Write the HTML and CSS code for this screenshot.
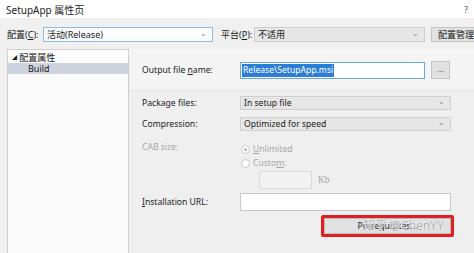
FILE: index.html
```html
<!DOCTYPE html>
<html>
<head>
<meta charset="utf-8">
<link rel="stylesheet" href="styles.css">
</head>
<body>
<div class="win">
  <div class="titlebar">
    <span class="title">SetupApp 属性页</span>
    <span class="help">?</span>
  </div>
  <div class="main">
    <div class="toprow">
      <span class="lbl1">配置(<u>C</u>):</span>
      <div class="combo active c1"><span>活动(Release)</span><span class="chev">&#8964;</span></div>
      <span class="lbl2">平台(<u>P</u>):</span>
      <div class="combo c2"><span>不适用</span><span class="chev">&#8964;</span></div>
      <div class="btn cfgmgr">配置管理器</div>
    </div>
    <div class="content">
      <div class="tree">
        <div class="node"><span class="tri">&#9698;</span> 配置属性</div>
        <div class="node sel">Build</div>
      </div>
      <div class="panel">
        <div class="top">
          <div class="row r-out">
            <span class="label">Output file <u>n</u>ame:</span>
            <div class="input focus"><span class="seltext">Release\SetupApp.msi</span></div>
            <div class="btn dots">...</div>
          </div>
        </div>
        <div class="bottom">
          <div class="row r-pkg">
            <span class="label">Package files:</span>
            <div class="combo wide"><span>In setup file</span><span class="chev">&#8964;</span></div>
          </div>
          <div class="row r-cmp">
            <span class="label">Compression:</span>
            <div class="combo wide"><span>Optimized for speed</span><span class="chev">&#8964;</span></div>
          </div>
          <div class="row r-cab">
            <span class="label dis">CAB size:</span>
            <div class="radios">
              <div class="radio"><span class="dot on"></span><span class="dis"><u>U</u>nlimited</span></div>
              <div class="radio"><span class="dot"></span><span class="dis">Custo<u>m</u>:</span></div>
              <div class="kbrow"><div class="kbinput"></div><span class="dis kb">Kb</span></div>
            </div>
          </div>
          <div class="row r-url">
            <span class="label"><u>I</u>nstallation URL:</span>
            <div class="input wide"></div>
          </div>
          <div class="row r-pre">
            <div class="redbox"><div class="btn prereq">Prerequisites...</div></div>
            <span class="wm">知乎 @ChenYY</span>
          </div>
        </div>
      </div>
    </div>
  </div>
</div>
</body>
</html>
```
FILE: styles.css
```css
* { box-sizing: border-box; }
html, body { margin: 0; padding: 0; }
body {
  width: 474px; height: 253px; overflow: hidden;
  font-family: "Noto Sans", "Noto Sans CJK SC", sans-serif;
  font-size: 9px; color: #1a1a1a;
  background: #f0f0f0;
}
u { text-decoration: underline; }
.win { width: 474px; height: 253px; display: flex; flex-direction: column; overflow: hidden; }
.titlebar {
  height: 18px; background: #fff; display: flex; align-items: center;
  justify-content: space-between; padding: 0 6px 0 6px;
}
.title { font-size: 10px; color: #222; }
.help { font-size: 9px; color: #555; }
.main { flex: 1; padding: 9px 0 0 7px; display: flex; flex-direction: column; }
.toprow { display: flex; align-items: center; height: 15px; }
.toprow > * { flex-shrink: 0; }
.lbl1 { width: 36px; }
.lbl2 { width: 33px; margin-left: 8px; }
.combo {
  height: 15px; display: flex; align-items: center; justify-content: space-between;
  padding: 0 5px 0 3px; background: #e6e6e6; border: 1px solid #cfcfcf;
}
.combo .chev { font-size: 8px; color: #888; line-height: 1; margin-top: -4px; }
.combo.active { background: #fafcfe; border-color: #8cbbe6; }
.c1 { width: 170px; }
.c2 { width: 171px; }
.btn {
  background: #e1e1e1; border: 1px solid #c4c4c4; display: flex;
  align-items: center; justify-content: center;
}
.cfgmgr { width: 56px; height: 15px; margin-left: 6px; justify-content: flex-start; padding-left: 6px; white-space: nowrap; }
.content { flex: 1; display: flex; margin-top: 7px; }
.tree {
  width: 122px; background: #fbfbfb; border: 1px solid #cfcfcf; border-bottom: none;
  padding-top: 2px;
}
.node { height: 11px; line-height: 11px; padding-left: 4px; overflow: hidden; }
.node .tri { font-size: 5px; vertical-align: 2px; }
.node.sel { background: #cfd3de; padding-left: 20px; }
.panel { flex: 1; display: flex; flex-direction: column; font-size: 8.6px; }
.top { height: 42px; background: #f4f4f4; padding-top: 12px; border-bottom: 1px solid #e8e8e8; }
.bottom { flex: 1; background: #efefef; padding-top: 5px; }
.row { display: flex; align-items: center; padding-left: 13px; }
.label { width: 98px; flex-shrink: 0; }
.dis { color: #a6a6a6; }
.input { height: 17px; background: #fff; border: 1px solid #c8c8c8; }
.input.focus { width: 185px; border-color: #6aa6d9; padding: 1px 0 0 1px; }
.seltext { background: #2a7fd4; color: #fff; padding: 0 1px; line-height: 13px; display: inline-block; }
.dots { width: 19px; height: 18px; margin-left: 6px; font-size: 8px; color: #555; align-items: flex-end; padding-bottom: 4px; }
.combo.wide { width: 211px; height: 14px; }
.r-cmp { margin-top: 7px; }
.r-cab { margin-top: 8px; align-items: flex-start; }
.r-cab .label { margin-top: 2px; }
.radios { display: flex; flex-direction: column; margin-left: 1px; padding-top: 3px; }
.radio { display: flex; align-items: center; height: 14px; }
.dot {
  width: 9px; height: 9px; border-radius: 50%; border: 1px solid #c8c8c8; background: #fff;
  margin-right: 3px; position: relative;
}
.dot.on::after {
  content: ""; position: absolute; left: 2px; top: 2px; width: 3px; height: 3px;
  border-radius: 50%; background: #b5b5b5;
}
.kbrow { display: flex; align-items: center; margin: 1px 0 0 18px; }
.kbinput { width: 53px; height: 18px; border: 1px solid #dadada; background: #f2f2f2; }
.kb { margin-left: 6px; font-family: "Liberation Serif", serif; font-size: 9.5px; }
.r-url { margin-top: 4px; }
.input.wide { width: 211px; height: 18px; }
.r-pre { margin-top: 4px; padding-left: 192px; position: relative; }
.redbox { border: 3px solid #e02020; border-radius: 2px; padding: 0; width: 133px; height: 22px; }
.prereq { height: 16px; border-color: #bcbcbc; }
.wm {
  position: absolute; left: 234px; top: 3px; font-size: 12px; color: rgba(150,150,160,0.8);
  text-shadow: 0 0 1px #fff, 0 0 1px #fff; font-family: "Noto Sans", "Noto Sans CJK SC", sans-serif;
  line-height: 16px;
}
```
